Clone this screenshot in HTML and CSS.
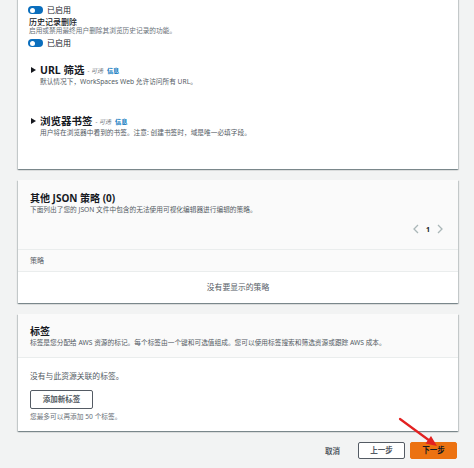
FILE: index.html
```html
<!DOCTYPE html>
<html lang="zh-CN">

<head>
  <meta charset="UTF-8" />
  <meta name="viewport" content="width=device-width, initial-scale=1.0" />
  <title>WorkSpaces Web 浏览器策略</title>
  <link rel="stylesheet" href="styles.css">
</head>

<body>
  <div class="page">

    <!-- Browser settings (top part scrolled away) -->
    <div class="card card-settings">
      <div class="toggle-row">
        <span class="toggle"></span>
        <span>已启用</span>
      </div>
      <div class="field-label">历史记录删除</div>
      <div class="field-desc">启用或禁用最终用户删除其浏览历史记录的功能。</div>
      <div class="toggle-row">
        <span class="toggle"></span>
        <span>已启用</span>
      </div>

      <div class="expander expander-url">
        <div class="expander-head">
          <span class="caret"></span>
          <span class="expander-title">URL 筛选</span>
          <span class="optional">- 可选</span>
          <a class="info" href="#">信息</a>
        </div>
        <div class="expander-desc">默认情况下，WorkSpaces Web 允许访问所有 URL。</div>
      </div>

      <div class="expander expander-bookmarks">
        <div class="expander-head">
          <span class="caret"></span>
          <span class="expander-title">浏览器书签</span>
          <span class="optional">- 可选</span>
          <a class="info" href="#">信息</a>
        </div>
        <div class="expander-desc">用户将在浏览器中看到的书签。注意: 创建书签时，域是唯一必填字段。</div>
      </div>
    </div>

    <!-- Extra JSON policies -->
    <div class="card">
      <div class="card-header header-json">
        <h2>其他 JSON 策略 (0)</h2>
        <p class="header-desc">下面列出了您的 JSON 文件中包含的无法使用可视化编辑器进行编辑的策略。</p>
        <div class="pager">
          <svg width="8" height="10" viewBox="0 0 8 10"><path d="M6 1 2 5l4 4" fill="none" stroke="#aab7b8" stroke-width="1.3"/></svg>
          <span class="page-num">1</span>
          <svg width="8" height="10" viewBox="0 0 8 10"><path d="M2 1l4 4-4 4" fill="none" stroke="#aab7b8" stroke-width="1.3"/></svg>
        </div>
      </div>
      <div class="table-head">策略</div>
      <div class="table-empty">没有要显示的策略</div>
    </div>

    <!-- Tags -->
    <div class="card">
      <div class="card-header header-tags">
        <h2>标签</h2>
        <p class="header-desc">标签是您分配给 AWS 资源的标记。每个标签由一个键和可选值组成。您可以使用标签搜索和筛选资源或跟踪 AWS 成本。</p>
      </div>
      <div class="tags-body">
        <div class="tags-empty">没有与此资源关联的标签。</div>
        <button class="btn btn-add">添加新标签</button>
        <div class="tags-note">您最多可以再添加 50 个标签。</div>
      </div>
    </div>

    <div class="actions">
      <a class="btn-link" href="#">取消</a>
      <button class="btn">上一步</button>
      <button class="btn btn-primary">下一步</button>
    </div>
  </div>

  <!-- annotation arrow pointing at the next button -->
  <svg class="pointer" width="474" height="468" viewBox="0 0 474 468">
    <line x1="400" y1="419" x2="430" y2="441" stroke="#e32121" stroke-width="2.2" stroke-linecap="round"/>
    <path d="M437 446l-11.5-2.5 5.5-7.5z" fill="#e32121"/>
  </svg>
</body>

</html>
```

FILE: styles.css
```css
body {
  margin: 0;
  background: #f2f3f3;
  font-family: "Noto Sans", "Noto Sans CJK SC", sans-serif;
  color: #16191f;
  font-size: 8px;
}

.page {
  padding: 0 16px 0 18px;
}

.card {
  background: #fff;
  box-shadow: 0 1px 1px 0 rgba(0, 28, 36, 0.3), 1px 1px 1px 0 rgba(0, 28, 36, 0.15), -1px 1px 1px 0 rgba(0, 28, 36, 0.15);
  margin-top: 11px;
  overflow: hidden;
}

/* settings card */

.card-settings {
  margin-top: -2px;
  padding: 6px 12px 32px 10px;
}

.toggle-row {
  display: flex;
  align-items: center;
  gap: 4px;
  height: 12px;
  font-size: 8px;
  line-height: 12px;
}

.toggle {
  width: 15px;
  height: 8px;
  border-radius: 4px;
  background: #0a6ebd;
  position: relative;
}

.toggle::after {
  content: '';
  position: absolute;
  left: 2px;
  top: 1.5px;
  width: 5px;
  height: 5px;
  border-radius: 50%;
  background: #fff;
}

.field-label {
  margin-top: 1px;
  font-size: 8px;
  line-height: 10px;
  font-weight: 500;
  padding-left: 1px;
}

.field-desc {
  font-size: 6.7px;
  line-height: 8px;
  color: #687078;
  padding-left: 1px;
}

.field-desc + .toggle-row {
  margin-top: 2px;
}

.expander {
  padding-left: 3px;
}

.expander-url {
  margin-top: 14px;
}

.expander-bookmarks {
  margin-top: 28px;
}

.expander-head {
  display: flex;
  align-items: center;
  height: 14px;
}

.caret {
  width: 0;
  height: 0;
  border-left: 5px solid #16191f;
  border-top: 3px solid transparent;
  border-bottom: 3px solid transparent;
  margin-right: 4px;
}

.expander-title {
  font-size: 10.5px;
  font-weight: 700;
  line-height: 14px;
}

.optional {
  font-size: 6px;
  font-style: italic;
  color: #687078;
  margin-left: 3px;
}

.info {
  font-size: 6.2px;
  font-weight: 700;
  color: #0073bb;
  text-decoration: none;
  margin-left: 4px;
}

.expander-desc {
  padding-left: 9px;
  font-size: 6.7px;
  line-height: 9px;
  color: #545b64;
}

/* card headers */

.card-header {
  background: #fafafa;
  border-bottom: 1px solid #eaeded;
  padding: 11px 14px 0 12px;
}

.card-header h2 {
  margin: 0;
  font-size: 10px;
  line-height: 14px;
  font-weight: 700;
}

.header-desc {
  margin: 0;
  font-size: 6.7px;
  line-height: 9px;
  color: #545b64;
}

.header-json {
  height: 58px;
}

.header-tags {
  height: 33px;
  padding-top: 10px;
}

.pager {
  display: flex;
  justify-content: flex-end;
  align-items: center;
  gap: 6px;
  margin-top: 9px;
  height: 12px;
}

.page-num {
  font-size: 7px;
  font-weight: 700;
}

/* table */

.table-head {
  background: #fafafa;
  border-bottom: 1px solid #eaeded;
  padding: 0 12px;
  height: 21px;
  line-height: 21px;
  font-size: 7px;
  color: #545b64;
}

.table-empty {
  height: 31px;
  line-height: 31px;
  text-align: center;
  font-size: 7.8px;
  color: #545b64;
}

/* tags */

.tags-body {
  padding: 13px 12px 10px;
}

.tags-empty {
  font-size: 7.8px;
  line-height: 11px;
  color: #545b64;
}

.tags-note {
  margin-top: 3px;
  font-size: 6.7px;
  line-height: 9px;
  color: #687078;
}

/* buttons */

.btn {
  font-family: inherit;
  font-size: 7.5px;
  font-weight: 700;
  color: #545b64;
  background: #fff;
  border: 1px solid #545b64;
  border-radius: 2px;
  height: 17px;
  width: 47px;
  padding: 0;
  line-height: 15px;
}

.btn-add {
  display: block;
  margin-top: 8px;
  width: 63px;
  height: 19px;
}

.btn-primary {
  background: #ec7211;
  border-color: #ec7211;
  color: #16191f;
}

.btn-link {
  font-size: 7.5px;
  font-weight: 700;
  color: #545b64;
  text-decoration: none;
  margin-right: 13px;
}

.actions {
  display: flex;
  justify-content: flex-end;
  align-items: center;
  gap: 5px;
  margin-top: 11px;
  padding-right: 1px;
}

.pointer {
  position: absolute;
  left: 0;
  top: 0;
  pointer-events: none;
}
```
